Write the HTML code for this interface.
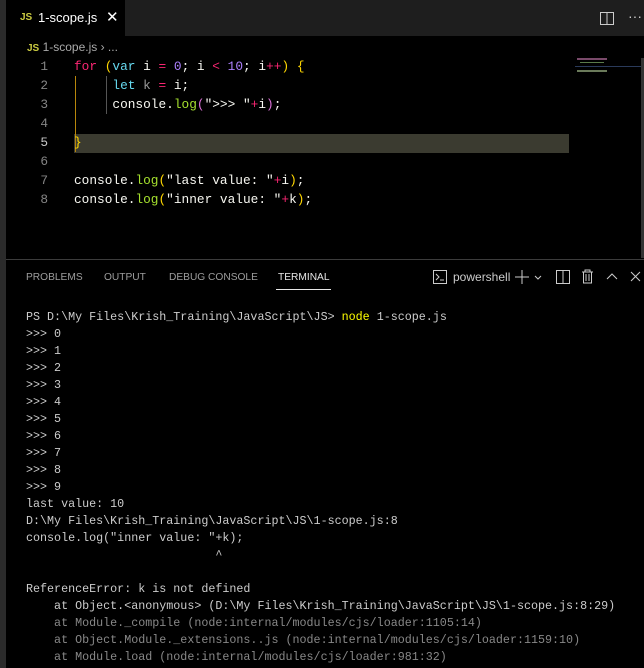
<!DOCTYPE html>
<html><head><meta charset="utf-8">
<style>
*{margin:0;padding:0;box-sizing:border-box}
html,body{width:644px;height:668px;background:#000;overflow:hidden;font-family:"Liberation Sans",sans-serif}
.strip{position:absolute;left:0;top:0;width:6px;height:668px;background:#2b2b2b}
.tabbar{position:absolute;left:6px;top:0;width:638px;height:36px;background:#1e1e1e}
.tab{position:absolute;left:0;top:0;width:119px;height:36px;background:#000;color:#fff;font-size:13px}
.js{color:#cbcb41;font-weight:bold;font-size:10px}
.mono{font-family:"Liberation Mono",monospace;white-space:pre}
.code{position:absolute;top:57px;left:0;font-size:12.8px;line-height:19px}
.ln{position:absolute;left:20px;width:28px;text-align:right;color:#858585}
.cl{position:absolute;left:74px;color:#f8f8f2}
.k{color:#f92672}.c{color:#66d9ef}.n{color:#ae81ff}.g{color:#a6e22e}.y{color:#ffd700}.p{color:#da70d6}.d{color:#999}
.term{position:absolute;left:26px;top:309px;font-size:11.7px;line-height:17px;color:#ccc}
.dim{color:#888}
.ptab{position:absolute;top:272px;font-size:10.2px;color:#9d9d9d}
</style></head><body>
<div class="strip"></div>
<div class="tabbar">
 <div class="tab"><span class="js" style="position:absolute;left:14px;top:12px">JS</span><span style="position:absolute;left:32px;top:10px">1-scope.js</span><span style="position:absolute;left:100px;top:8px;font-size:15px">✕</span></div>
 <svg style="position:absolute;left:594px;top:12px" width="14" height="13"><rect x="0.5" y="0.5" width="13" height="12" fill="none" stroke="#ccc"/><line x1="7" y1="0" x2="7" y2="13" stroke="#ccc"/></svg>
 <span style="position:absolute;left:622px;top:8px;color:#ccc;font-size:14px">···</span>
</div>
<div style="position:absolute;left:27px;top:40px;font-size:12px;color:#aaa"><span class="js">JS</span> 1-scope.js › ...</div>
<div style="position:absolute;left:74px;top:134px;width:495px;height:19px;background:#3b3b30"></div>
<div style="position:absolute;left:75px;top:76px;width:1px;height:76px;background:#b8860b"></div>
<div style="position:absolute;left:106px;top:76px;width:1px;height:38px;background:#555"></div>
<div class="code mono">
<div class="ln" style="top:0">1</div><div class="ln" style="top:19px">2</div><div class="ln" style="top:38px">3</div><div class="ln" style="top:57px">4</div><div class="ln" style="top:76px;color:#c6c6c6">5</div><div class="ln" style="top:95px">6</div><div class="ln" style="top:114px">7</div><div class="ln" style="top:133px">8</div>
<div class="cl" style="top:0"><span class="k">for</span> <span class="y">(</span><span class="c">var</span> i <span class="k">=</span> <span class="n">0</span>; i <span class="k">&lt;</span> <span class="n">10</span>; i<span class="k">++</span><span class="y">)</span> <span class="y">{</span></div>
<div class="cl" style="top:19px">     <span class="c">let</span> <span class="d">k</span> <span class="k">=</span> i;</div>
<div class="cl" style="top:38px">     console.<span class="g">log</span><span class="p">(</span>"&gt;&gt;&gt; "<span class="k">+</span>i<span class="p">)</span>;</div>
<div class="cl" style="top:76px"><span class="y">}</span></div>
<div class="cl" style="top:114px">console.<span class="g">log</span><span class="y">(</span>"last value: "<span class="k">+</span>i<span class="y">)</span>;</div>
<div class="cl" style="top:133px">console.<span class="g">log</span><span class="y">(</span>"inner value: "<span class="k">+</span>k<span class="y">)</span>;</div>
</div>
<div style="position:absolute;left:577px;top:58px;width:30px;height:2px;background:#7a4a6a"></div>
<div style="position:absolute;left:580px;top:62px;width:24px;height:1px;background:#5a7a4a"></div>
<div style="position:absolute;left:575px;top:66px;width:69px;height:1px;background:#2a3a5a"></div>
<div style="position:absolute;left:577px;top:70px;width:30px;height:2px;background:#6a7a5a"></div>
<div style="position:absolute;left:641px;top:58px;width:3px;height:200px;background:#333"></div>
<div style="position:absolute;left:6px;top:259px;width:638px;height:1px;background:#3c3c3c"></div>
<div class="ptab" style="left:26px">PROBLEMS</div>
<div class="ptab" style="left:104px">OUTPUT</div>
<div class="ptab" style="left:169px">DEBUG CONSOLE</div>
<div class="ptab" style="left:278px;color:#e7e7e7">TERMINAL</div>
<div style="position:absolute;left:276px;top:289px;width:55px;height:1px;background:#e7e7e7"></div>
<svg style="position:absolute;left:433px;top:270px" width="14" height="14"><rect x="0.5" y="0.5" width="13" height="13" fill="none" stroke="#ccc"/><path d="M3 4l3 3-3 3M7 10h4" stroke="#ccc" fill="none"/></svg>
<span style="position:absolute;left:453px;top:270px;font-size:12px;color:#ccc">powershell</span>
<svg style="position:absolute;left:515px;top:270px" width="28" height="14"><path d="M7 0v14M0 7h14" stroke="#ccc"/><path d="M20 6l3 3 3-3" stroke="#ccc" fill="none"/></svg>
<svg style="position:absolute;left:556px;top:270px" width="14" height="14"><rect x="0.5" y="0.5" width="13" height="13" fill="none" stroke="#ccc"/><line x1="7" y1="0" x2="7" y2="14" stroke="#ccc"/></svg>
<svg style="position:absolute;left:581px;top:269px" width="13" height="15"><path d="M1 3h11M4 3V1h5v2M2.5 3v11h8V3M5 5v7M8 5v7" stroke="#ccc" fill="none"/></svg>
<svg style="position:absolute;left:606px;top:272px" width="12" height="8"><path d="M1 7l5-5 5 5" stroke="#ccc" fill="none"/></svg>
<svg style="position:absolute;left:630px;top:271px" width="11" height="11"><path d="M1 1l9 9M10 1l-9 9" stroke="#ccc"/></svg>
<div class="term mono">PS D:\My Files\Krish_Training\JavaScript\JS&gt; <span style="color:#ffff00">node</span> 1-scope.js
&gt;&gt;&gt; 0
&gt;&gt;&gt; 1
&gt;&gt;&gt; 2
&gt;&gt;&gt; 3
&gt;&gt;&gt; 4
&gt;&gt;&gt; 5
&gt;&gt;&gt; 6
&gt;&gt;&gt; 7
&gt;&gt;&gt; 8
&gt;&gt;&gt; 9
last value: 10
D:\My Files\Krish_Training\JavaScript\JS\1-scope.js:8
console.log("inner value: "+k);
                           ^

ReferenceError: k is not defined
    at Object.&lt;anonymous&gt; (D:\My Files\Krish_Training\JavaScript\JS\1-scope.js:8:29)
<span class="dim">    at Module._compile (node:internal/modules/cjs/loader:1105:14)
    at Object.Module._extensions..js (node:internal/modules/cjs/loader:1159:10)
    at Module.load (node:internal/modules/cjs/loader:981:32)</span></div>
</body></html>
